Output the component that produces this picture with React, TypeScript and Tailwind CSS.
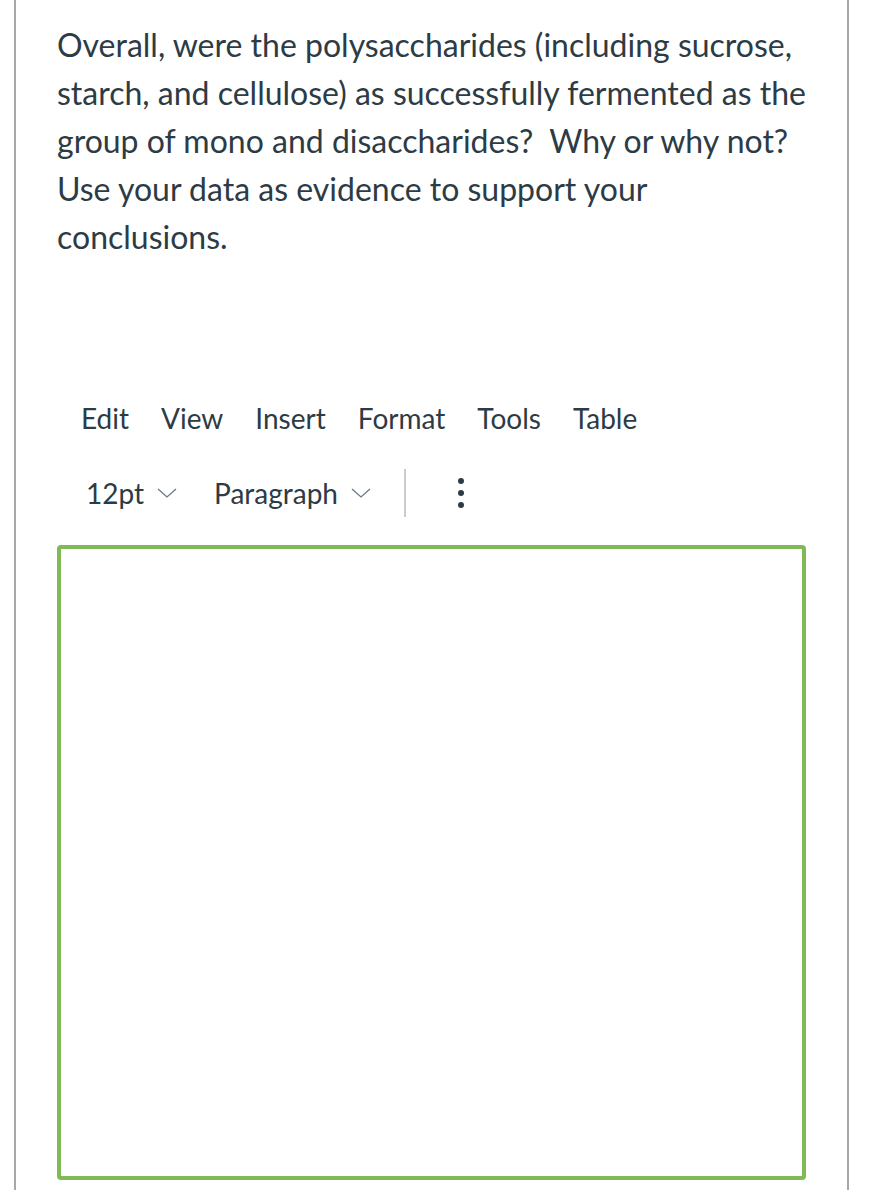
function Chevron() {
  return (
    <svg width="20" height="10" viewBox="0 0 20 10" fill="none" className="text-[#6b7780]">
      <path d="M1 1l9 8 9-8" stroke="currentColor" strokeWidth="1.3" />
    </svg>
  );
}

const menus = ["Edit", "View", "Insert", "Format", "Tools", "Table"];

export default function App() {
  return (
    <div className="min-h-[1190px] bg-white font-['Lato','Open_Sans',sans-serif] text-[#2d3b45]">
      <div className="mx-[14px] h-[1190px] w-[835px] overflow-hidden border-x-2 border-[#a8a8a8] pl-[41px] pr-[20px]">
        <p className="pt-[21px] text-[32px] leading-[48px]">
          Overall, were the polysaccharides (including sucrose,
          <br />
          starch, and cellulose) as successfully fermented as the
          <br />
          group of mono and disaccharides?&nbsp; Why or why not?
          <br />
          Use your data as evidence to support your
          <br />
          conclusions.
        </p>

        <div className="mt-[141px] flex gap-[32px] pl-[24px] text-[28px] leading-[32px]">
          {menus.map((m) => (
            <span key={m}>{m}</span>
          ))}
        </div>

        <div className="mt-[34px] flex h-[50px] items-center pl-[29px] text-[28px]">
          <span>12pt</span>
          <span className="ml-[13px]">
            <Chevron />
          </span>
          <span className="ml-[37px]">Paragraph</span>
          <span className="ml-[13px]">
            <Chevron />
          </span>
          <span className="ml-[33px] h-[48px] w-[2px] bg-[#c7cdd1]" />
          <span className="ml-[52px] flex flex-col gap-[6px]">
            <span className="h-[6px] w-[6px] rounded-full bg-[#2d3b45]" />
            <span className="h-[6px] w-[6px] rounded-full bg-[#2d3b45]" />
            <span className="h-[6px] w-[6px] rounded-full bg-[#2d3b45]" />
          </span>
        </div>

        <div className="mt-[27px] h-[635px] w-[749px] rounded-[4px] border-[4px] border-[#7fba54]" />
      </div>
    </div>
  );
}
